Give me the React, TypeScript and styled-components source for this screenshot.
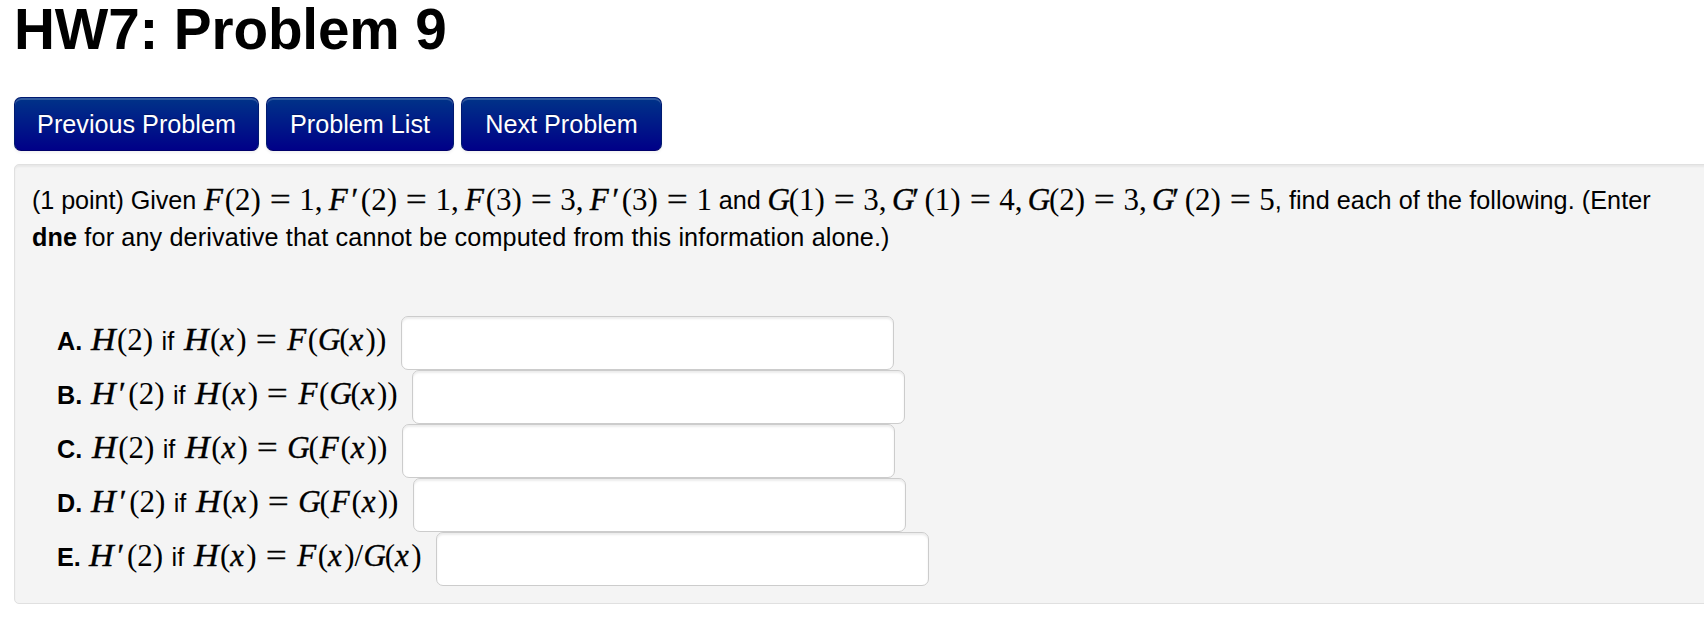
import React from "react";
import styled, { createGlobalStyle } from "styled-components";

const GlobalStyle = createGlobalStyle`
  body {
    margin: 0;
    background: #ffffff;
    overflow: hidden;
  }
`;

// advance width of every math glyph, in px
const advance: Record<string, number> = {
  F: 21.6,
  G: 21.2,
  H: 26.4,
  x: 16.1,
  "(": 10.3,
  ")": 10.3,
  "/": 9.2,
  "=": 38.5,
  ",": 13.1,
  "′": 11.4,
};

const questions = [
  { label: "A.", gap: 1.4, left: "H(2)", right: "H(x)=F(G(x))" },
  { label: "B.", gap: 1.4, left: "H′(2)", right: "H(x)=F(G(x))" },
  { label: "C.", gap: 2.6, left: "H(2)", right: "H(x)=G(F(x))" },
  { label: "D.", gap: 2.2, left: "H′(2)", right: "H(x)=G(F(x))" },
  { label: "E.", gap: 1.4, left: "H′(2)", right: "H(x)=F(x)/G(x)" },
];

const Formula = ({ children }: { children: string }) => (
  <MathText>
    {children.split("").map((char, index) => {
      const width = advance[char] || 15.5;
      if (char === "=") return <Relation key={index} $width={width}>=</Relation>;
      if (char === "′") {
        return (
          <Prime key={index} $width={width} $tight={children[index - 1] === "G"}>
            ′
          </Prime>
        );
      }
      if (/[A-Za-z]/.test(char)) {
        return (
          <Variable key={index} $width={width} $char={char}>
            {char}
          </Variable>
        );
      }
      return <Glyph key={index} $width={width}>{char}</Glyph>;
    })}
  </MathText>
);

export default function App() {
  return (
    <Page>
      <GlobalStyle />
      <Title>HW7: Problem 9</Title>
      <Nav>
        <NavButton $width={245}>Previous Problem</NavButton>
        <NavButton $width={188}>Problem List</NavButton>
        <NavButton $width={201}>Next Problem</NavButton>
      </Nav>
      <Problem>
        <Statement>
          (1 point) Given <Formula>F(2)=1,F′(2)=1,F(3)=3,F′(3)=1</Formula> and{" "}
          <Formula>G(1)=3,G′(1)=4,G(2)=3,G′(2)=5</Formula>
          <Spaced $spacing={0.06}>, find each of the following. (Enter</Spaced>
          <br />
          <Spaced $spacing={0.14}>
            <b>dne</b> for any derivative that cannot be computed from this information alone.)
          </Spaced>
        </Statement>
        <Questions>
          {questions.map(({ label, gap, left, right }) => (
            <Question key={label}>
              <Prompt>
                <Letter $gap={gap}>{label}</Letter> <Formula>{left}</Formula>
                <Condition> if </Condition>
                <Formula>{right}</Formula>
              </Prompt>
              <Answer type="text" aria-label={label} />
            </Question>
          ))}
        </Questions>
      </Problem>
    </Page>
  );
}

const Page = styled.main`
  box-sizing: border-box;
  height: 636px;
  padding-left: 14px;
  font-family: "Liberation Sans", Arial, sans-serif;
  font-size: 25.2px;
  color: #000000;
`;

const Title = styled.h1`
  margin: 0;
  height: 97px;
  font-size: 56.7px;
  line-height: 60px;
  font-weight: 700;
  letter-spacing: -0.15px;
`;

const Nav = styled.nav`
  display: flex;
  gap: 7px;
  margin-bottom: 13px;
`;

const NavButton = styled.button<{ $width: number }>`
  box-sizing: border-box;
  width: ${({ $width }) => $width}px;
  height: 54px;
  padding: 1px 0 0;
  border: 1px solid #001a70;
  border-bottom-color: #00006a;
  border-radius: 7px;
  background: linear-gradient(#003388, #000088);
  box-shadow: inset 0 2px 0 rgba(255, 255, 255, 0.2), 0 2px 3px rgba(0, 0, 0, 0.05);
  font-family: inherit;
  font-size: 25.2px;
  color: #ffffff;
  text-shadow: 0 -1px 0 rgba(0, 0, 0, 0.25);
  white-space: nowrap;
`;

const Problem = styled.section`
  box-sizing: border-box;
  height: 440px;
  margin-right: -20px;
  padding: 17px 0 0 17px;
  border: 1px solid #e0e0e0;
  border-radius: 5px;
  background: #f4f4f4;
  box-shadow: inset 0 2px 2px rgba(0, 0, 0, 0.05);
`;

const MathText = styled.span`
  display: inline-flex;
  align-items: baseline;
  font-family: "Liberation Serif", "Times New Roman", serif;
  font-size: 31px;
  line-height: 30px;
  letter-spacing: 0;
`;

const Statement = styled.p`
  margin: 0;
  line-height: 37px;
  letter-spacing: -0.07px;
  white-space: nowrap;

  ${MathText} {
    transform: translateY(1px);
  }
`;

const Spaced = styled.span<{ $spacing: number }>`
  letter-spacing: ${({ $spacing }) => $spacing}px;
`;

const Glyph = styled.span<{ $width: number }>`
  width: ${({ $width }) => $width}px;
  flex: none;
`;

const Relation = styled(Glyph)`
  text-align: center;
  transform: scaleX(1.18);
  -webkit-text-stroke: 0.4px #000000;
`;

const Variable = styled(Glyph)<{ $char: string }>`
  font-style: italic;
  text-indent: ${({ $char }) => ($char === "F" ? 1 : 0)}px;
  transform: ${({ $char }) => ($char === "H" ? "scaleX(1.1)" : "none")};
  transform-origin: left;
  -webkit-text-stroke: 0.4px #000000;
`;

const Prime = styled(Glyph)<{ $tight: boolean }>`
  text-indent: ${({ $tight }) => ($tight ? "-1px" : "2px")};
  -webkit-text-stroke: 0.4px #000000;
`;

const Questions = styled.div`
  display: flex;
  flex-direction: column;
  margin-top: 60px;
  padding-left: 25px;

  ${MathText}:last-child {
    margin-left: 0.4px;
  }

  ${Relation} {
    margin-right: 1px;
  }
`;

const Question = styled.div`
  display: flex;
  align-items: flex-start;
  height: 54px;
`;

const Prompt = styled.label`
  line-height: 50px;
  white-space: nowrap;
`;

const Letter = styled.b<{ $gap: number }>`
  margin-right: ${({ $gap }) => $gap}px;
`;

const Condition = styled.span`
  margin: 0 2px 0 1.5px;
`;

const Answer = styled.input`
  box-sizing: border-box;
  width: 493px;
  height: 54px;
  margin: 0 0 0 14.6px;
  padding: 7px 11px;
  border: 1px solid #cccccc;
  border-radius: 7px;
  background: #ffffff;
  box-shadow: inset 0 2px 2px rgba(0, 0, 0, 0.075);
  font: inherit;
  outline: none;
`;
